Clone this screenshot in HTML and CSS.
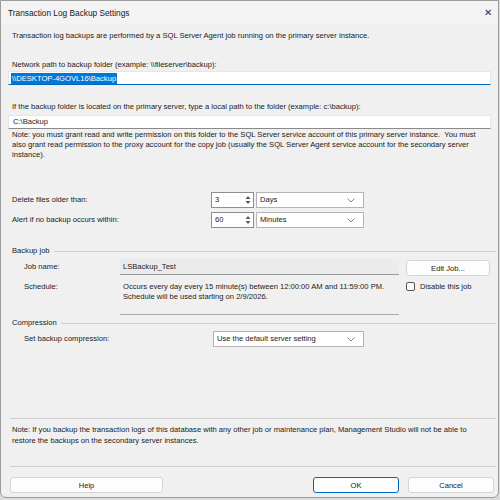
FILE: index.html
```html
<!DOCTYPE html>
<html lang="en">
<head>
    <meta charset="UTF-8">
    <title>Transaction Log Backup Settings</title>
    <link rel="stylesheet" href="styles.css">
</head>
<body>
    <div class="window">
        <div class="titlebar">
            <span class="title">Transaction Log Backup Settings</span>
            <span class="close">&#x2715;</span>
        </div>

        <div class="content">
            <p class="intro">Transaction log backups are performed by a SQL Server Agent job running on the primary server instance.</p>

            <div class="field-label label-network">Network path to backup folder (example: \\fileserver\backup):</div>
            <div class="textbox focused"><span class="selected">\\DESKTOP-4GOVL16\Backup</span></div>

            <div class="field-label label-local">If the backup folder is located on the primary server, type a local path to the folder (example: c:\backup):</div>
            <div class="textbox local">C:\Backup</div>

            <p class="note">Note: you must grant read and write permission on this folder to the SQL Server service account of this primary server instance. &nbsp;You must<br>also grant read permission to the proxy account for the copy job (usually the SQL Server Agent service account for the secondary server<br>instance).</p>

            <div class="option-row row-delete">
                <span class="option-label">Delete files older than:</span>
                <div class="spinner">3
                    <svg class="spin-arrows" width="6" height="10" viewBox="0 0 6 10"><path d="M0.5 4 L3 1 L5.5 4 Z M0.5 6 L3 9 L5.5 6 Z" fill="#5a5a5a"/></svg>
                </div>
                <div class="combo combo-unit">Days
                    <svg class="chevron" width="8" height="5" viewBox="0 0 8 5"><path d="M0.5 0.5 L4 4 L7.5 0.5" fill="none" stroke="#777" stroke-width="0.9"/></svg>
                </div>
            </div>

            <div class="option-row row-alert">
                <span class="option-label">Alert if no backup occurs within:</span>
                <div class="spinner">60
                    <svg class="spin-arrows" width="6" height="10" viewBox="0 0 6 10"><path d="M0.5 4 L3 1 L5.5 4 Z M0.5 6 L3 9 L5.5 6 Z" fill="#5a5a5a"/></svg>
                </div>
                <div class="combo combo-unit">Minutes
                    <svg class="chevron" width="8" height="5" viewBox="0 0 8 5"><path d="M0.5 0.5 L4 4 L7.5 0.5" fill="none" stroke="#777" stroke-width="0.9"/></svg>
                </div>
            </div>

            <div class="group-header header-job">
                <span>Backup job</span>
                <div class="group-line"></div>
            </div>

            <div class="job-row">
                <span class="sub-label">Job name:</span>
                <div class="readonly-field">LSBackup_Test</div>
                <button class="btn btn-edit">Edit Job...</button>
            </div>

            <div class="schedule-row">
                <span class="sub-label">Schedule:</span>
                <div class="schedule-text">Occurs every day every 15 minute(s) between 12:00:00 AM and 11:59:00 PM.<br>Schedule will be used starting on 2/9/2026.</div>
                <label class="checkbox-label"><span class="checkbox"></span>Disable this job</label>
            </div>

            <div class="group-header header-compression">
                <span>Compression</span>
                <div class="group-line"></div>
            </div>

            <div class="compression-row">
                <span class="sub-label">Set backup compression:</span>
                <div class="combo combo-compression">Use the default server setting
                    <svg class="chevron" width="8" height="5" viewBox="0 0 8 5"><path d="M0.5 0.5 L4 4 L7.5 0.5" fill="none" stroke="#777" stroke-width="0.9"/></svg>
                </div>
            </div>

            <div class="separator sep-top"></div>
            <p class="footer-note">Note: If you backup the transaction logs of this database with any other job or maintenance plan, Management Studio will not be able to<br>restore the backups on the secondary server instances.</p>
            <div class="separator sep-bottom"></div>

            <div class="button-row">
                <button class="btn btn-help">Help</button>
                <div class="right-buttons">
                    <button class="btn btn-ok">OK</button>
                    <button class="btn btn-cancel">Cancel</button>
                </div>
            </div>
        </div>
    </div>
</body>
</html>
```

FILE: styles.css
```css
* {
    box-sizing: border-box;
}
body {
    margin: 0;
    background: #dcdcdc;
    font-family: "Liberation Sans", Arial, sans-serif;
    font-size: 7.6px;
    color: #1a1a1a;
}
p {
    margin: 0;
}
.window {
    width: 499px;
    height: 498px;
    background: #f0f0f0;
    border: 1px solid #9c9c9c;
    border-radius: 0 0 6px 6px;
    overflow: hidden;
    display: flex;
    flex-direction: column;
}
.titlebar {
    height: 23px;
    flex-shrink: 0;
    display: flex;
    align-items: center;
    justify-content: space-between;
    padding: 0 6px 0 7px;
    background: #f3f3f3;
    font-size: 8.3px;
}
.close {
    font-size: 10px;
    color: #333;
}
.content {
    padding: 0 7px;
    display: flex;
    flex-direction: column;
    line-height: 10px;
    white-space: nowrap;
}
.intro {
    margin-top: 7px;
    padding-left: 4px;
}
.field-label {
    padding-left: 4px;
    height: 10px;
}
.label-network {
    margin-top: 19px;
}
.label-local {
    margin-top: 17px;
}
.textbox {
    height: 14px;
    background: #fff;
    border: 1px solid #e6e6e6;
    border-bottom-color: #8a8a8a;
    padding-left: 2px;
    display: flex;
    align-items: center;
    margin-top: 1px;
}
.textbox.focused {
    border-bottom: 1px solid #0067c0;
}
.textbox.local {
    margin-top: 3px;
    padding-left: 4px;
}
.selected {
    background: #0078d7;
    color: #fff;
    line-height: 11px;
    padding: 0 1px;
}
.note {
    margin-top: 1px;
    padding-left: 4px;
}
.option-row {
    display: flex;
    height: 16px;
    align-items: stretch;
}
.row-delete {
    margin-top: 32px;
}
.row-alert {
    margin-top: 4px;
}
.option-label {
    width: 203px;
    padding-left: 4px;
    display: flex;
    align-items: center;
}
.spinner {
    width: 43px;
    background: #fff;
    border: 1px solid #8e8e8e;
    display: flex;
    align-items: center;
    justify-content: space-between;
    padding: 0 2px 0 3px;
}
.combo {
    background: #fff;
    border: 1px solid #b4b4b4;
    display: flex;
    align-items: center;
    justify-content: space-between;
    padding: 0 8px 0 3px;
}
.combo-unit {
    width: 108px;
    margin-left: 2px;
}
.combo-compression {
    width: 151px;
}
.group-header {
    display: flex;
    align-items: center;
    height: 10px;
    padding-left: 4px;
    margin-right: -5px;
}
.group-line {
    flex: 1;
    height: 1px;
    background: #cfcfcf;
    margin-left: 4px;
}
.header-job {
    margin-top: 18px;
}
.header-compression {
    margin-top: 3px;
}
.sub-label {
    padding-left: 16px;
    flex-shrink: 0;
}
.job-row {
    display: flex;
    height: 16px;
    margin-top: 3px;
    align-items: stretch;
}
.job-row .sub-label {
    width: 112px;
    display: flex;
    align-items: center;
}
.readonly-field {
    width: 279px;
    background: #ebebeb;
    border-bottom: 1px solid #9a9a9a;
    padding-left: 3px;
    display: flex;
    align-items: center;
}
.btn {
    font-family: inherit;
    font-size: 7.6px;
    color: #1a1a1a;
    background: #fdfdfd;
    border: 1px solid #d4d4d4;
    border-radius: 3px;
    height: 16px;
    padding: 0;
}
.btn-edit {
    width: 84px;
    margin-left: 7px;
    margin-top: 1px;
}
.schedule-row {
    display: flex;
    margin-top: 7px;
}
.schedule-row .sub-label {
    width: 112px;
}
.schedule-text {
    width: 279px;
    height: 33px;
    padding-left: 3px;
    border-bottom: 1px solid #a8a8a8;
}
.checkbox-label {
    margin-left: 7px;
    display: flex;
    align-items: flex-start;
}
.checkbox {
    width: 9px;
    height: 9px;
    border: 1px solid #555;
    border-radius: 2px;
    background: #fafafa;
    margin-right: 5px;
}
.compression-row {
    display: flex;
    height: 16px;
    margin-top: 3px;
    align-items: stretch;
}
.compression-row .sub-label {
    width: 205px;
    display: flex;
    align-items: center;
}
.separator {
    height: 1px;
    background: #d0d0d0;
    margin-left: 2px;
    margin-right: -5px;
}
.sep-top {
    margin-top: 71px;
}
.footer-note {
    margin-top: 6px;
    padding-left: 4px;
    line-height: 10.5px;
}
.sep-bottom {
    margin-top: 20px;
}
.button-row {
    display: flex;
    justify-content: space-between;
    margin-top: 10px;
    margin-left: 2px;
    margin-right: -3px;
}
.btn-help {
    width: 153px;
}
.right-buttons {
    display: flex;
    gap: 9px;
}
.btn-ok {
    width: 86px;
    border-color: #0067c0;
}
.btn-cancel {
    width: 86px;
}
```
